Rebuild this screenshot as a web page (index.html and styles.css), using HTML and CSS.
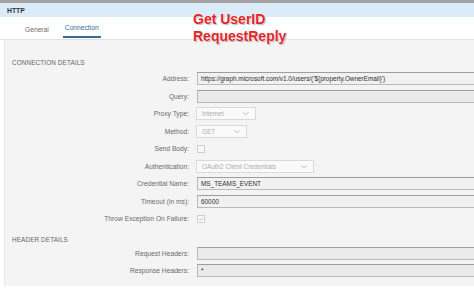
FILE: index.html
```html
<!DOCTYPE html>
<html lang="en">
<head>
  <meta charset="UTF-8">
  <title>HTTP Connection</title>
  <link rel="stylesheet" href="styles.css">
</head>
<body>
  <div class="strip"></div>
  <div class="titlebar">HTTP</div>

  <div class="tabs">
    <span class="tab">General</span>
    <span class="tab activo">Connection</span>
  </div>

  <div class="contenido">
    <div class="seccion">CONNECTION DETAILS</div>
    <div class="form">
      <label>Address:</label>
      <div class="campo"><span class="input">https://graph.microsoft.com/v1.0/users/('${property.OwnerEmail}')</span></div>

      <label>Query:</label>
      <div class="campo"><span class="input vacio"></span></div>

      <label>Proxy Type:</label>
      <div class="campo"><span class="select proxy">Internet<svg viewBox="0 0 8 4"><polyline points="0.5,0.5 4,3.5 7.5,0.5"/></svg></span></div>

      <label>Method:</label>
      <div class="campo"><span class="select metodo">GET<svg viewBox="0 0 8 4"><polyline points="0.5,0.5 4,3.5 7.5,0.5"/></svg></span></div>

      <label>Send Body:</label>
      <div class="campo"><span class="check"></span></div>

      <label>Authentication:</label>
      <div class="campo"><span class="select auth">OAuth2 Client Credentials<svg viewBox="0 0 8 4"><polyline points="0.5,0.5 4,3.5 7.5,0.5"/></svg></span></div>

      <label>Credential Name:</label>
      <div class="campo"><span class="input">MS_TEAMS_EVENT</span></div>

      <label>Timeout (in ms):</label>
      <div class="campo"><span class="input">60000</span></div>

      <label>Throw Exception On Failure:</label>
      <div class="campo"><span class="check"><svg viewBox="0 0 8 8"><polyline points="1.8,4.2 3.4,5.8 6.3,2.2"/></svg></span></div>
    </div>

    <div class="seccion seccion-2">HEADER DETAILS</div>
    <div class="form form-2">
      <label>Request Headers:</label>
      <div class="campo"><span class="input vacio"></span></div>

      <label>Response Headers:</label>
      <div class="campo"><span class="input vacio">*</span></div>
    </div>
  </div>

  <div class="nota">Get UserID<br>RequestReply</div>
</body>
</html>
```

FILE: styles.css
```css
body {
  margin: 0;
  font-family: 'Liberation Sans', Arial, sans-serif;
  background: #fff;
  color: #333;
  width: 474px;
  height: 290px;
  overflow: hidden;
  position: relative;
}

.strip {
  height: 3px;
  background: #a3a3a3;
}

.titlebar {
  height: 14px;
  line-height: 15px;
  background: #dcebf8;
  padding-left: 7px;
  font-size: 6.8px;
  font-weight: bold;
  color: #2d2d2d;
}

.tabs {
  height: 23px;
  display: flex;
  align-items: stretch;
  padding-left: 25px;
  gap: 16px;
  border-bottom: 1px solid #e2e2e2;
  box-sizing: border-box;
}

.tab {
  font-size: 6.7px;
  color: #6b6b6b;
  display: flex;
  align-items: center;
  padding-top: 2px;
}

.tab.activo {
  color: #3b6a93;
  border-bottom: 2px solid #3b6a93;
  padding: 2px 2px 0;
  margin-left: -2px;
  margin-bottom: 1px;
}

.contenido {
  margin-left: 4px;
  height: 246px;
  background: #f4f4f4;
  border-left: 1px solid #e8e8e8;
  overflow: hidden;
}

.seccion {
  margin: 19px 0 0 7px;
  height: 8px;
  line-height: 8px;
  font-size: 6.4px;
  color: #666;
  letter-spacing: 0.1px;
}

.seccion-2 {
  margin-top: 8px;
}

.form {
  margin-top: 3px;
  display: grid;
  grid-template-columns: 184px 1fr;
  grid-auto-rows: 17.5px;
  column-gap: 8px;
}

.form-2 {
  margin-top: 1.5px;
  grid-auto-rows: 17px;
}

.form label {
  text-align: right;
  font-size: 6.7px;
  color: #6a6a6a;
  display: flex;
  align-items: center;
  justify-content: flex-end;
}

.campo {
  display: flex;
  align-items: center;
}

.input {
  flex: 1;
  height: 13px;
  box-sizing: border-box;
  background: #f1f1f1;
  border: 1px solid #b9b9b9;
  border-top-color: #9d9d9d;
  border-right: none;
  font-size: 6.4px;
  color: #2e2e2e;
  padding-left: 3px;
  line-height: 11px;
  white-space: nowrap;
}

.input.vacio {
  background: #eaeaea;
}

.select {
  height: 13px;
  box-sizing: border-box;
  background: #fafafa;
  border: 1px solid #dadada;
  font-size: 6.4px;
  color: #adadad;
  padding: 0 0 0 5px;
  display: flex;
  align-items: center;
  justify-content: space-between;
  margin-left: -1px;
}

.select svg {
  width: 6px;
  height: 3px;
  fill: none;
  stroke: #a8a8a8;
  stroke-width: 1;
  margin-right: 6px;
}

.select.proxy { width: 60px; }
.select.metodo { width: 51px; }
.select.auth { width: 118px; }

.check {
  width: 8px;
  height: 8px;
  box-sizing: border-box;
  border: 1px solid #d0d0d0;
  background: #f8f8f8;
  display: flex;
}

.check svg {
  width: 100%;
  height: 100%;
  fill: none;
  stroke: #b3b3b3;
  stroke-width: 1;
}

.nota {
  position: absolute;
  left: 193px;
  top: 11px;
  font-size: 14px;
  line-height: 17px;
  font-weight: bold;
  color: #e2252a;
  text-shadow: 0 0 1px #fff, 0 0 2px #fff, 1px 1px 1px rgba(0, 0, 0, 0.35);
}
```
